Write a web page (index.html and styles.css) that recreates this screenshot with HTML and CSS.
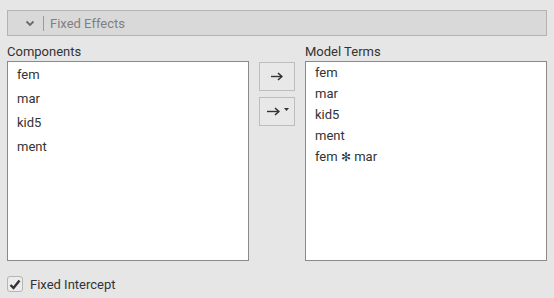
FILE: index.html
```html
<!DOCTYPE html>
<html>
<head>
<meta charset="utf-8">
<link rel="stylesheet" href="styles.css">
</head>
<body>
<div class="page">
  <div class="header">
    <span class="chev"><svg width="10" height="7" viewBox="0 0 10 7"><path d="M1.5 1.5 L5 5 L8.5 1.5" fill="none" stroke="#6a6a6a" stroke-width="1.8"/></svg></span>
    <span class="sep"></span>
    <span class="title">Fixed Effects</span>
  </div>
  <div class="grid">
    <div class="col">
      <div class="label">Components</div>
      <div class="box list-a">
        <div class="item">fem</div>
        <div class="item">mar</div>
        <div class="item">kid5</div>
        <div class="item">ment</div>
      </div>
    </div>
    <div class="mid">
      <div class="btn"><svg width="12" height="9" viewBox="0 0 12 9"><path d="M0 4.5 H11" stroke="#333" stroke-width="1.4"/><path d="M7 1 L10.8 4.5 L7 8" fill="none" stroke="#333" stroke-width="1.6"/></svg></div>
      <div class="btn btn-drop"><svg width="13" height="9" viewBox="0 0 13 9"><path d="M0 4.5 H12" stroke="#333" stroke-width="1.4"/><path d="M8 1 L11.8 4.5 L8 8" fill="none" stroke="#333" stroke-width="1.6"/></svg><svg class="tri" width="5" height="3" viewBox="0 0 5 3"><path d="M0 0 H5 L2.5 3 Z" fill="#333"/></svg></div>
    </div>
    <div class="col">
      <div class="label">Model Terms</div>
      <div class="box list-b">
        <div class="item">fem</div>
        <div class="item">mar</div>
        <div class="item">kid5</div>
        <div class="item">ment</div>
        <div class="item">fem <span class="ast">✻</span> mar</div>
      </div>
    </div>
  </div>
  <div class="check-row">
    <span class="cb"><svg width="12" height="11" viewBox="0 0 12 11"><path d="M1.5 6 L4.5 9 L10.5 1.5" fill="none" stroke="#333" stroke-width="2.4"/></svg></span>
    <span class="cb-label">Fixed Intercept</span>
  </div>
</div>
</body>
</html>
```
FILE: styles.css
```css
html, body {
  margin: 0;
  padding: 0;
  background: #e6e6e6;
}
body {
  font-family: Roboto, "Liberation Sans", sans-serif;
  font-size: 13px;
  color: #333;
}
.page {
  width: 540px;
  padding: 10px 7px 0 7px;
}
.header {
  height: 24px;
  border: 1px solid #b3b3b3;
  background: #d9d9d9;
  display: flex;
  align-items: center;
}
.chev {
  width: 10px;
  height: 7px;
  margin-left: 17px;
  display: flex;
}
.sep {
  width: 1px;
  height: 15px;
  background: #9a9a9a;
  margin-left: 8px;
}
.title {
  margin-left: 6px;
  color: #808080;
}
.grid {
  display: grid;
  grid-template-columns: 242px 56px 242px;
  margin-top: 7px;
}
.label {
  height: 18px;
  line-height: 18px;
}
.box {
  background: #fff;
  border: 1px solid #8a8a8a;
  box-sizing: border-box;
  height: 200px;
}
.list-a {
  padding-top: 1px;
}
.list-a .item {
  height: 24px;
  line-height: 24px;
  padding-left: 9px;
}
.list-b .item {
  height: 21px;
  line-height: 21px;
  padding-left: 9px;
}
.ast {
  font-family: "DejaVu Sans", sans-serif;
  font-size: 12px;
}
.mid {
  display: flex;
  flex-direction: column;
  align-items: center;
  padding-top: 19px;
  gap: 6px;
}
.btn {
  width: 36px;
  height: 29px;
  box-sizing: border-box;
  border: 1px solid #bdbdbd;
  background: #e8e8e8;
  display: flex;
  align-items: center;
  justify-content: center;
}
.btn svg {
  display: block;
}
.btn-drop {
  padding-left: 1px;
}
.tri {
  margin-left: 4px;
  margin-top: -4px;
}
.check-row {
  display: flex;
  align-items: center;
  margin-top: 15px;
}
.cb {
  width: 16px;
  height: 16px;
  box-sizing: border-box;
  border: 1px solid #b5b5b5;
  border-radius: 3px;
  background: #ececec;
  display: flex;
  align-items: center;
  justify-content: center;
}
.cb-label {
  margin-left: 7px;
}
```
